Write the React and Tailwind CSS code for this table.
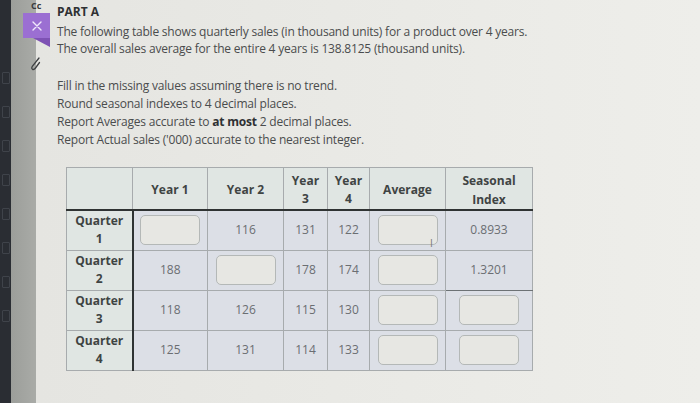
import React from 'react';

const font = { fontFamily: '"Open Sans", "Noto Sans", sans-serif' };

const InputBox = () => (
    <div className="mx-auto w-[60px] h-[30px] rounded-[5px] border-[1.5px] border-[#b4b8b7] bg-[#e7e7e3]" />
);

const rows = [
    { q: '1', cells: [null, '116', '131', '122'], si: '0.8933' },
    { q: '2', cells: ['188', null, '178', '174'], si: '1.3201' },
    { q: '3', cells: ['118', '126', '115', '130'], si: null },
    { q: '4', cells: ['125', '131', '114', '133'], si: null },
];

const SalesTable = () => (
    <table className="table-fixed border-collapse text-[12px] leading-[18px]">
        <thead>
            <tr className="h-[40px] bg-[#e0e6e3] text-[#3f4443]">
                <th className="w-[66px] border border-[#a7abad] border-b-2 border-b-[#2f3333]" />
                <th className="w-[75px] border border-[#a7abad] border-b-2 border-b-[#2f3333] font-bold pt-[3px]">Year 1</th>
                <th className="w-[76px] border border-[#a7abad] border-b-2 border-b-[#2f3333] font-bold pt-[3px]">Year 2</th>
                <th className="w-[44px] border border-[#a7abad] border-b-2 border-b-[#2f3333] font-bold pt-[3px]">Year<br />3</th>
                <th className="w-[42px] border border-[#a7abad] border-b-2 border-b-[#2f3333] font-bold pt-[3px]">Year<br />4</th>
                <th className="w-[76px] border border-[#a7abad] border-b-2 border-b-[#2f3333] font-bold pt-[3px]">Average</th>
                <th className="w-[87px] border border-[#a7abad] border-b-2 border-b-[#2f3333] font-bold leading-[19px] pt-[3px]">Seasonal<br />Index</th>
            </tr>
        </thead>
        <tbody>
            {rows.map((row, i) => (
                <tr key={row.q} className="h-[40px]">
                    <th className="border border-[#a7abad] border-r-2 border-r-[#2f3333] bg-[#e0e6e3] text-[#3f4443] font-bold">
                        Quarter<br />{row.q}
                    </th>
                    {row.cells.map((c, j) => (
                        <td key={j} className="border border-[#a7abad] bg-[#dcdfe6] text-center text-[#6b6e72]">
                            {c === null ? <InputBox /> : c}
                        </td>
                    ))}
                    <td className="relative border border-[#a7abad] bg-[#dcdfe6]">
                        <InputBox />
                        {i === 0 && (
                            <span className="absolute left-[60px] top-[27px] text-[10px] leading-none text-[#777]">I</span>
                        )}
                    </td>
                    <td className={`border border-[#a7abad] bg-[#dcdfe6] text-center text-[#6b6e72] ${i === 1 ? 'border-b-[#6d7275]' : ''}`}>
                        {row.si === null ? <InputBox /> : row.si}
                    </td>
                </tr>
            ))}
        </tbody>
    </table>
);

export default function App() {
    return (
        <div className="relative flex w-[700px] h-[403px] overflow-hidden" style={font}>
            {/* dark desktop edge */}
            <div className="w-[11px] h-full bg-[#2a2d33] flex flex-col items-center gap-[22px] pt-[72px]">
                {[0, 1, 2, 3, 4, 5, 6, 7].map(n => (
                    <div key={n} className="w-[8px] h-[12px] border border-[#3f434a] rounded-[1px]" />
                ))}
            </div>
            {/* grey side panel */}
            <div className="w-[25px] h-full bg-gradient-to-r from-[#9c9e9a] to-[#a9aba7]" />
            {/* main page */}
            <div className="flex-1 h-full bg-gradient-to-r from-[#e5e5e1] to-[#eeeeea] pl-[21px] pt-[3px] text-[12px] tracking-[-0.2px] text-[#4a4c4d]">
                <div className="leading-[17px] font-bold text-[#2f3133] tracking-normal">PART A</div>
                <div className="mt-[4px] leading-[16.5px]">
                    <p>The following table shows quarterly sales (in thousand units) for a product over 4 years.</p>
                    <p>The overall sales average for the entire 4 years is 138.8125 (thousand units).</p>
                </div>
                <div className="mt-[20px] leading-[18px]">
                    <p>Fill in the missing values assuming there is no trend.</p>
                    <p>Round seasonal indexes to 4 decimal places.</p>
                    <p>Report Averages accurate to <span className="font-bold text-[#2f3133]">at most</span> 2 decimal places.</p>
                    <p>Report Actual sales ('000) accurate to the nearest integer.</p>
                </div>
                <div className="mt-[18px] ml-[9px] tracking-normal">
                    <SalesTable />
                </div>
            </div>

            {/* overlays on the left edge */}
            <span className="absolute left-[31px] top-[1px] text-[9px] leading-[10px] font-bold text-[#3a3c3e]">Cc</span>
            <div className="absolute left-[23px] top-[13px] w-[27px] h-[25px] bg-[#9b6fd2] flex items-center justify-center">
                <svg width="12" height="12" viewBox="0 0 12 12">
                    <path d="M2 2 L10 10 M10 2 L2 10" stroke="#f1e9fb" strokeWidth="1.4" strokeLinecap="round" />
                </svg>
            </div>
            <svg className="absolute left-[33px] top-[38px]" width="17" height="9" viewBox="0 0 17 9">
                <polygon points="0,0 17,0 17,9" fill="#7e52b4" />
            </svg>
            <svg className="absolute left-[29px] top-[56px]" width="12" height="15" viewBox="0 0 12 15">
                <path d="M10 2 L3.5 10 Q2 12.5 3.5 13.3 Q5 14 6.5 12 L10.5 6.5" fill="none" stroke="#3d3f42" strokeWidth="1.3" strokeLinecap="round" />
            </svg>
        </div>
    );
}
